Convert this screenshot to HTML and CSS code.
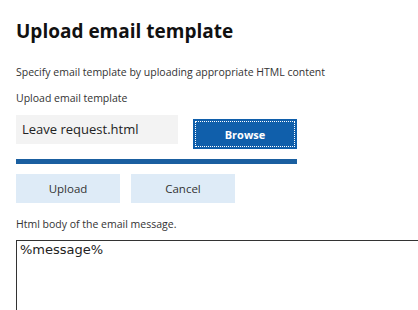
FILE: index.html
```html
<!DOCTYPE html>
<html>
<head>
<meta charset="utf-8">
<link rel="stylesheet" href="styles.css">
</head>
<body>
<div class="page">
  <h1 class="title">Upload email template</h1>
  <p class="desc">Specify email template by uploading appropriate HTML content</p>
  <p class="label">Upload email template</p>
  <div class="file-row">
    <div class="file-name">Leave request.html</div>
    <button class="browse"><span class="browse-inner">Browse</span></button>
  </div>
  <div class="progress"></div>
  <div class="actions">
    <button class="btn">Upload</button>
    <button class="btn">Cancel</button>
  </div>
  <p class="label body-label">Html body of the email message.</p>
  <div class="editor">%message%</div>
</div>
</body>
</html>
```
FILE: styles.css
```css
html, body {
  margin: 0;
  padding: 0;
  background: #ffffff;
}
.page {
  padding: 18px 0 0 16px;
  font-family: "Open Sans", "Noto Sans", sans-serif;
  color: #333333;
}
.title {
  margin: 0;
  font-size: 19px;
  line-height: 26px;
  font-weight: 700;
  color: #111111;
}
.desc {
  margin: 21px 0 0 0;
  font-size: 10.5px;
  line-height: 14px;
  color: #333333;
}
.label {
  margin: 12px 0 0 0;
  font-size: 10.5px;
  line-height: 14px;
  color: #333333;
}
.file-row {
  display: flex;
  align-items: flex-start;
  gap: 15px;
  margin-top: 10px;
}
.file-name {
  width: 156px;
  height: 29px;
  padding-left: 6px;
  background: #f3f3f3;
  font-size: 13px;
  line-height: 29px;
  color: #222222;
}
.browse {
  margin-top: 4px;
  width: 104px;
  height: 30px;
  padding: 2px;
  border: 0;
  background: #105fab;
  font-family: inherit;
  cursor: pointer;
}
.browse-inner {
  display: flex;
  align-items: center;
  justify-content: center;
  height: 100%;
  border: 1px dotted #ffffff;
  box-sizing: border-box;
  color: #ffffff;
  font-weight: 700;
  font-size: 11px;
}
.progress {
  margin-top: 10px;
  width: 281px;
  height: 5px;
  background: #1a5fa0;
}
.actions {
  display: flex;
  gap: 11px;
  margin-top: 10px;
}
.btn {
  width: 104px;
  height: 29px;
  border: 0;
  background: #deebf7;
  color: #333333;
  font-family: inherit;
  font-size: 11.5px;
  padding: 0;
}
.body-label {
  margin-top: 14px;
}
.editor {
  margin-top: 9px;
  height: 80px;
  border: 1px solid #333333;
  border-right: 0;
  padding: 1px 3px;
  font-family: "DejaVu Sans", sans-serif;
  font-size: 13px;
  line-height: 15px;
  color: #222222;
}
```
